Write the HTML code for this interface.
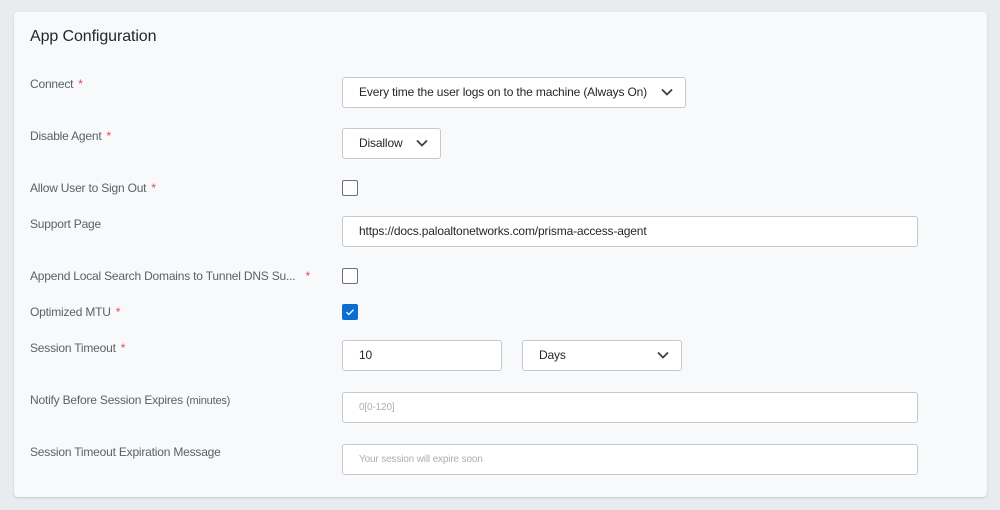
<!DOCTYPE html>
<html><head><style>
*{box-sizing:border-box;margin:0;padding:0}
body{width:1000px;height:510px;background:#e9ecef;font-family:"Liberation Sans",sans-serif;position:relative;overflow:hidden}
.card{position:absolute;left:14px;top:12px;width:973px;height:485px;background:#f8f9fb;border-radius:4px;box-shadow:0 1px 2px rgba(0,0,0,.15)}
.t{position:absolute;left:30px;top:28px;font-size:16px;color:#23272b;letter-spacing:-0.1px}
.l{position:absolute;left:30px;font-size:12px;color:#5a6168;letter-spacing:-0.2px}
.l i{color:#e5484d;font-style:normal;margin-left:5px}
.b{position:absolute;left:342px;height:31px;background:#fff;border:1px solid #c4c9ce;border-radius:3px;font-size:12px;color:#23272b;padding-left:16px;line-height:29px;letter-spacing:-0.15px}
.ph{color:#aab0b5;font-size:10px}
.cb{position:absolute;left:342px;width:16px;height:16px;border:1px solid #6b7177;border-radius:2px;background:#fff}
.ck{background:#0a6ed1;border-color:#0a6ed1}
svg.ch{position:absolute;right:12px;top:10px}
</style></head><body>
<div class="card"></div>
<div class="t">App Configuration</div>
<div class="l" style="top:77px">Connect<i>*</i></div>
<div class="b" style="top:77px;width:344px">Every time the user logs on to the machine (Always On)<svg class="ch" width="12" height="8" viewBox="0 0 12 8"><path d="M1 1.5l5 5 5-5" stroke="#3a4046" stroke-width="1.8" fill="none"/></svg></div>
<div class="l" style="top:129px">Disable Agent<i>*</i></div>
<div class="b" style="top:128px;width:99px">Disallow<svg class="ch" width="12" height="8" viewBox="0 0 12 8"><path d="M1 1.5l5 5 5-5" stroke="#3a4046" stroke-width="1.8" fill="none"/></svg></div>
<div class="l" style="top:181px">Allow User to Sign Out<i>*</i></div>
<div class="cb" style="top:180px"></div>
<div class="l" style="top:217px">Support Page</div>
<div class="b" style="top:216px;width:576px">https://docs.paloaltonetworks.com/prisma-access-agent</div>
<div class="l" style="top:269px">Append Local Search Domains to Tunnel DNS Su...<i style="margin-left:10px">*</i></div>
<div class="cb" style="top:268px"></div>
<div class="l" style="top:305px">Optimized MTU<i>*</i></div>
<div class="cb ck" style="top:304px"><svg width="14" height="14" viewBox="0 0 14 14"><path d="M3.5 7.2l2.3 2.3 4.7-4.8" stroke="#fff" stroke-width="1.3" fill="none"/></svg></div>
<div class="l" style="top:341px">Session Timeout<i>*</i></div>
<div class="b" style="top:340px;width:160px">10</div>
<div class="b" style="top:340px;left:522px;width:160px">Days<svg class="ch" width="12" height="8" viewBox="0 0 12 8"><path d="M1 1.5l5 5 5-5" stroke="#3a4046" stroke-width="1.8" fill="none"/></svg></div>
<div class="l" style="top:393px">Notify Before Session Expires <span style="font-size:11px">(minutes)</span></div>
<div class="b ph" style="top:392px;width:576px">0[0-120]</div>
<div class="l" style="top:445px">Session Timeout Expiration Message</div>
<div class="b ph" style="top:444px;width:576px">Your session will expire soon</div>
</body></html>
